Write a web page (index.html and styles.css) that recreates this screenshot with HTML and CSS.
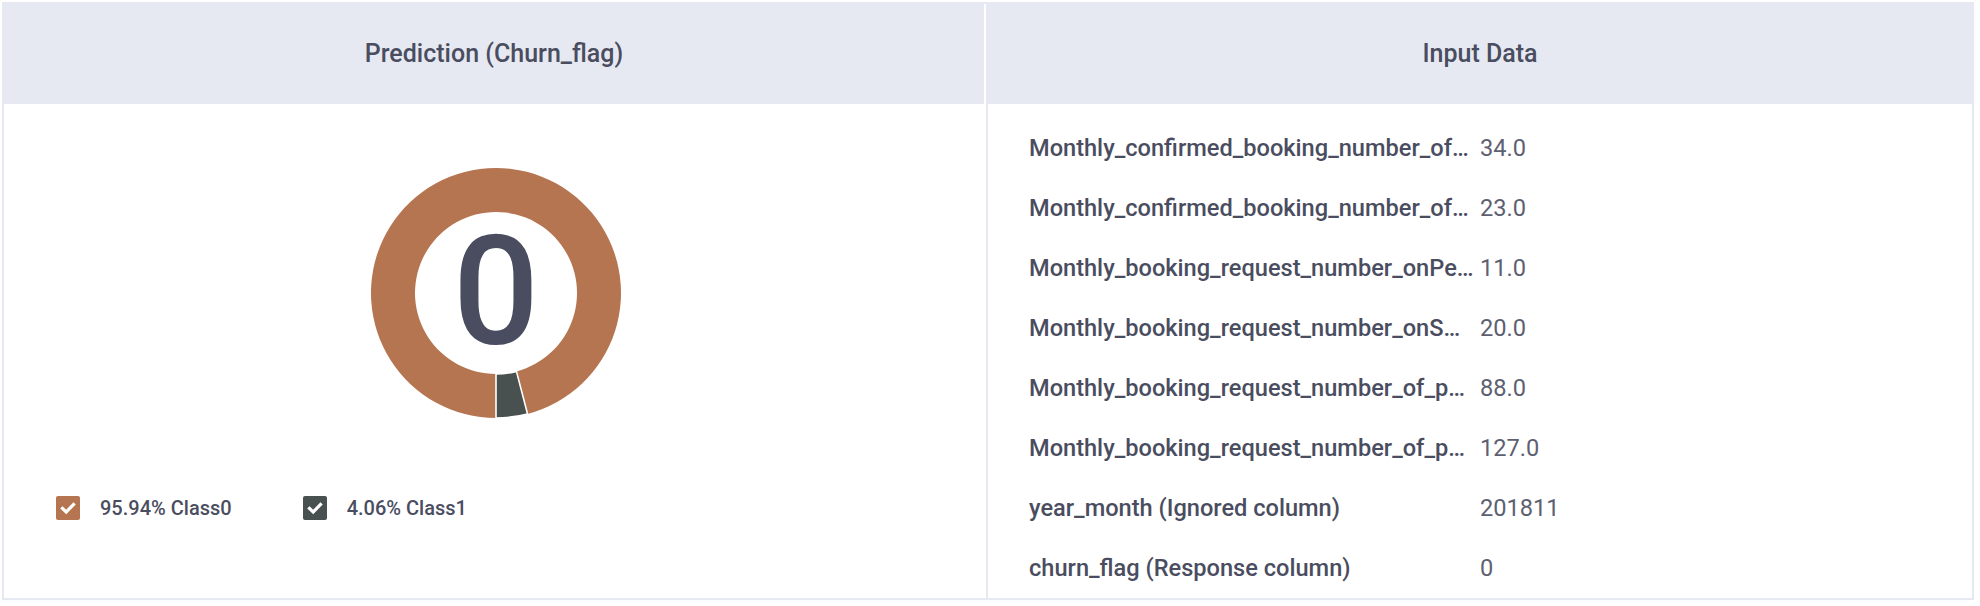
FILE: index.html
```html
<!DOCTYPE html>
<html>
<head>
<meta charset="utf-8">
<link rel="stylesheet" href="styles.css">
</head>
<body>
<div class="panel">
  <div class="head head-left">Prediction (Churn_flag)</div>
  <div class="divider"></div>
  <div class="head head-right">Input Data</div>

  <div class="pred">
    <div class="donut">
      <svg class="donut-svg" width="250" height="250" viewBox="0 0 250 250">
        <path class="seg0" d="M125,250 A125,125 0 1 1 156.55,245.95 L145.44,203.38 A81,81 0 1 0 125,206 Z"/>
        <path class="seg1" d="M156.55,245.95 A125,125 0 0 1 125,250 L125,206 A81,81 0 0 0 145.44,203.38 Z"/>
      </svg>
      <div class="donut-label">0</div>
    </div>
    <div class="legend">
      <div class="legend-item">
        <span class="check check-0"><svg width="24" height="24" viewBox="0 0 24 24"><path d="M6.5 12.5 L10.2 16 L17.5 8.5" /></svg></span>
        <span class="legend-text">95.94% Class0</span>
      </div>
      <div class="legend-item">
        <span class="check check-1"><svg width="24" height="24" viewBox="0 0 24 24"><path d="M6.5 12.5 L10.2 16 L17.5 8.5" /></svg></span>
        <span class="legend-text">4.06% Class1</span>
      </div>
    </div>
  </div>

  <div class="inputs">
    <div class="row"><span class="label">Monthly_confirmed_booking_number_of_pets_onSite</span><span class="value">34.0</span></div>
    <div class="row"><span class="label">Monthly_confirmed_booking_number_of_requests</span><span class="value">23.0</span></div>
    <div class="row"><span class="label">Monthly_booking_request_number_onPersonal</span><span class="value">11.0</span></div>
    <div class="row"><span class="label">Monthly_booking_request_number_onSMS</span><span class="value">20.0</span></div>
    <div class="row"><span class="label">Monthly_booking_request_number_of_pets</span><span class="value">88.0</span></div>
    <div class="row"><span class="label">Monthly_booking_request_number_of_peoples</span><span class="value">127.0</span></div>
    <div class="row"><span class="label">year_month (Ignored column)</span><span class="value">201811</span></div>
    <div class="row"><span class="label">churn_flag (Response column)</span><span class="value">0</span></div>
  </div>
</div>
</body>
</html>
```
FILE: styles.css
```css
* { box-sizing: border-box; }
html, body { margin: 0; padding: 0; background: #ffffff; }
body { font-family: Roboto, "Liberation Sans", sans-serif; color: #4a4d60; }

.panel {
  margin: 2px 0 0 2px;
  width: 1972px;
  height: 598px;
  border: 2px solid #e6e9f1;
  display: grid;
  grid-template-columns: 982px 2px 1fr;
  grid-template-rows: 100px 1fr;
}

.head {
  background: #e6e9f1;
  display: flex;
  align-items: center;
  justify-content: center;
  font-size: 25px;
  font-weight: 500;
  color: #4a4d60;
  padding-bottom: 2px;
}
.head-left { margin-right: 2px; grid-column: 1; grid-row: 1; }
.head-right { grid-column: 3; grid-row: 1; }
.divider { grid-column: 2; grid-row: 1 / 3; background: #e6e9f1; }

.pred {
  grid-column: 1; grid-row: 2;
  display: flex;
  flex-direction: column;
  padding-top: 64px;
}
.donut {
  display: grid;
  width: 250px; height: 250px;
  align-self: center;
  margin-left: 2px;
}
.donut-svg, .donut-label { grid-area: 1 / 1; }
.seg0 { fill: #b67551; }
.seg1 { fill: #485050; stroke: #ffffff; stroke-width: 1.6; }
.donut-label {
  display: flex; align-items: center; justify-content: center;
  font-size: 152px; font-weight: 500; color: #4a4d60;
  line-height: 1;
  padding-bottom: 2px;
}

.legend {
  display: flex;
  margin-top: 78px;
  padding-left: 52px;
  gap: 71px;
}
.legend-item { display: flex; align-items: center; gap: 20px; }
.check { width: 24px; height: 24px; border-radius: 2px; display: block; }
.check svg { display: block; }
.check path { fill: none; stroke: #ffffff; stroke-width: 3.2; stroke-linecap: square; }
.check-0 { background: #b67551; }
.check-1 { background: #485050; }
.legend-text { font-size: 20px; font-weight: 500; color: #4a4d60; }

.inputs {
  grid-column: 3; grid-row: 2;
  padding: 14px 0 0 41px;
  display: flex; flex-direction: column;
}
.row { height: 60px; display: flex; align-items: center; font-size: 23.6px; }
.label {
  width: 451px;
  flex: none;
  padding-right: 5px;
  font-weight: 500;
  color: #4a4d60;
  white-space: nowrap;
  overflow: hidden;
  text-overflow: ellipsis;
}
.value { color: #5d6071; font-weight: 400; }
```
